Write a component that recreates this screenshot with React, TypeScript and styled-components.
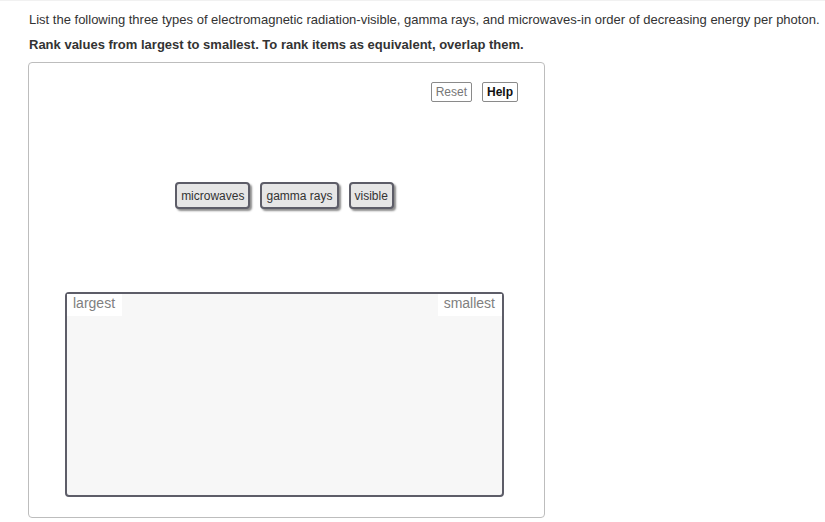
import React from "react";
import styled, { createGlobalStyle } from "styled-components";

const GlobalStyle = createGlobalStyle`
  html, body {
    margin: 0;
    padding: 0;
    background: #fff;
  }
  body {
    font-family: "Liberation Sans", Arial, sans-serif;
    border-top: 1px solid #f1f1f1;
  }
`;

const Page = styled.div`
  padding: 10px 0 0 29px;
  color: #333;
`;

const Prompt = styled.p`
  margin: 0;
  font-size: 13px;
  line-height: 17px;
`;

const Instruction = styled.p`
  margin: 8px 0 0;
  font-size: 13px;
  line-height: 17px;
  font-weight: bold;
`;

const Panel = styled.div`
  margin: 9px 0 0 -1px;
  width: 515px;
  height: 454px;
  border: 1px solid #bdbdbd;
  border-radius: 4px;
  display: flex;
  flex-direction: column;
`;

const Toolbar = styled.div`
  display: flex;
  justify-content: flex-end;
  gap: 10px;
  padding: 19px 26px 0 0;
`;

const ToolButton = styled.button<{ $strong?: boolean }>`
  height: 20px;
  padding: 0 4px;
  border: 1px solid #8a8a8a;
  border-radius: 2px;
  background: #fff;
  font-family: "Liberation Sans", Arial, sans-serif;
  font-size: 12px;
  font-weight: ${(p) => (p.$strong ? "bold" : "normal")};
  color: ${(p) => (p.$strong ? "#111" : "#777")};
`;

const Pool = styled.div`
  display: flex;
  justify-content: center;
  gap: 10px;
  margin-top: 80px;
  padding-right: 4px;
`;

const Item = styled.div`
  height: 23px;
  padding: 0 4px;
  display: flex;
  align-items: center;
  border: 2px solid #5d5d68;
  border-radius: 4px;
  background: #e6e6e6;
  box-shadow: 2px 2px 2px rgba(0, 0, 0, 0.45);
  font-size: 12px;
  color: #333;
`;

const RankBox = styled.div`
  margin: 83px 0 0 36px;
  width: 435px;
  height: 201px;
  border: 2px solid #5d5d68;
  border-radius: 4px;
  background: #f7f7f7;
  display: flex;
  justify-content: space-between;
  align-items: flex-start;
`;

const RankLabel = styled.span`
  background: #fff;
  padding: 1px 7px 4px 6px;
  font-size: 14px;
  line-height: 17px;
  color: #808080;
`;

const items = ["microwaves", "gamma rays", "visible"];

export default function App() {
  return (
    <Page>
      <GlobalStyle />
      <Prompt>
        List the following three types of electromagnetic radiation-visible, gamma rays, and
        microwaves-in order of decreasing energy per photon.
      </Prompt>
      <Instruction>
        Rank values from largest to smallest. To rank items as equivalent, overlap them.
      </Instruction>
      <Panel>
        <Toolbar>
          <ToolButton>Reset</ToolButton>
          <ToolButton $strong>Help</ToolButton>
        </Toolbar>
        <Pool>
          {items.map((label) => (
            <Item key={label}>{label}</Item>
          ))}
        </Pool>
        <RankBox>
          <RankLabel>largest</RankLabel>
          <RankLabel>smallest</RankLabel>
        </RankBox>
      </Panel>
    </Page>
  );
}
